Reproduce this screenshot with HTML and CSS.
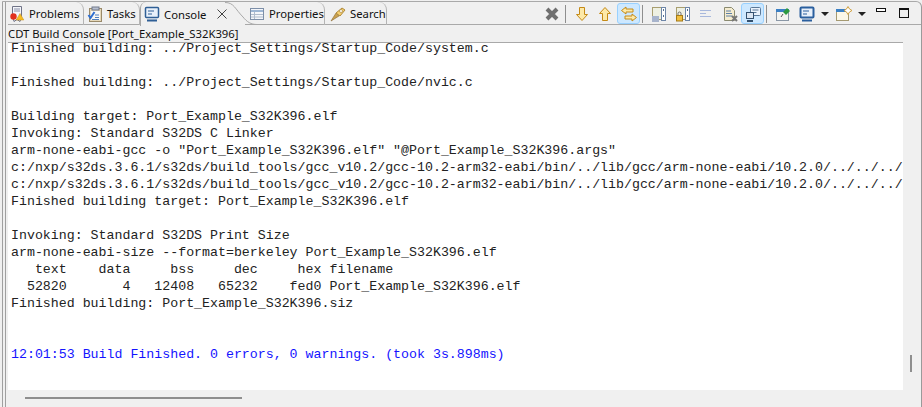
FILE: index.html
```
<!DOCTYPE html>
<html lang="en">
<head>
<meta charset="utf-8">
<title>Console</title>
<link rel="stylesheet" href="styles.css">
</head>
<body>
<div class="view">
  <div class="tabbar">
    <div class="tab tab-problems">
      <svg class="ti" viewBox="0 0 16 16"><path d="M3.500 .5h9v10l-1.500 5-3-2-3 2-1.500-5z" fill="#f4f5fa" stroke="#6f7386"/><path d="M5 3h6M5 5h6" stroke="#8a90a8"/><circle cx="4.500" cy="10.500" r="3.200" fill="#e2301e"/><path d="M11 7.500l3.800 6.500H7.200z" fill="#f6bd22" stroke="#c98f10" stroke-width=".5"/></svg>
      <span>Problems</span>
    </div>
    <div class="tab tab-tasks">
      <svg class="ti" viewBox="0 0 16 16"><rect x="2.500" y="2.500" width="12" height="13" fill="#e6d9bb" stroke="#9a8a6a"/><rect x="5" y="1" width="7" height="3" fill="#b8c0d0" stroke="#70788a"/><rect x="4" y="5" width="9" height="9" fill="#f8f8f4"/><path d="M1.500 9l2 3 4-6" fill="none" stroke="#2f6fd0" stroke-width="2"/><path d="M8 9h4M8 11.500h4M5 13.500h7" stroke="#4f7fc0"/></svg>
      <span>Tasks</span>
    </div>
    <div class="tab tab-console">
      <svg class="ti" viewBox="0 0 16 16"><rect x="1.500" y="1.500" width="13" height="10" rx="1" fill="#e8f0fa" stroke="#2f5f96" stroke-width="1.500"/><path d="M4 5h6M4 8h4" stroke="#2f5f96"/><path d="M3 14.500h10" stroke="#2f5f96" stroke-width="2"/></svg>
      <span>Console</span>
      <svg class="close" viewBox="0 0 10 10"><path d="M.5.500l9 9M9.500.500l-9 9" stroke="#444" fill="none"/></svg>
      <svg class="tail" viewBox="0 0 32 24"><path d="M0 .5C9 .5 10 7 18 15c4 5 8 7.500 14 7.500" fill="none" stroke="#a9a9a9"/></svg>
    </div>
    <div class="tab tab-properties">
      <svg class="ti" viewBox="0 0 16 16"><rect x="1.500" y="2.500" width="13" height="11" fill="#f4f6fa" stroke="#7d8fa8"/><path d="M2 5h12" stroke="#9db6d4" stroke-width="2"/><path d="M5.500 6v7M2 8.500h12M2 11h12" stroke="#b0bccc"/></svg>
      <span>Properties</span>
    </div>
    <div class="tab tab-search">
      <svg class="ti" viewBox="0 0 16 16"><path d="M1 15l5-8 3 3z" fill="#c8a050" stroke="#8a6a30" stroke-width=".6"/><path d="M6 7l6-5 3 2-5 6z" fill="#f6d070" stroke="#b08a3a"/><circle cx="11" cy="5" r="1.500" fill="#fff" stroke="#a07a30" stroke-width=".6"/></svg>
      <span>Search</span>
    </div>
    <div class="tools">
      <span class="tool"><svg viewBox="0 0 16 16"><path d="M3 3l10 10M13 3L3 13" stroke="#6f6f6f" stroke-width="4"/></svg></span>
      <i class="sep"></i>
      <span class="tool"><svg viewBox="0 0 16 16"><path d="M5.500 1.500h5v7h3L8 14.500 2.500 8.500h3z" fill="#fde9a8" stroke="#c58a16"/></svg></span>
      <span class="tool"><svg viewBox="0 0 16 16"><path d="M5.500 14.500h5v-7h3L8 1.500 2.500 7.500h3z" fill="#fde9a8" stroke="#c58a16"/></svg></span>
      <span class="tool on step"><svg viewBox="0 0 16 16"><path d="M.5 4.500L5 1v2h7v3H5v2z" fill="#fde9a8" stroke="#c58a16"/><path d="M15.500 11.500L11 8v2H4v3h7v2z" fill="#fde9a8" stroke="#c58a16"/></svg></span>
      <i class="sep"></i>
      <span class="tool"><svg viewBox="0 0 16 16"><rect x="1.500" y="1.500" width="9" height="12" fill="#eef0e2" stroke="#a89e70"/><rect x="10.500" y="1.500" width="4" height="13" fill="#fff" stroke="#6d86a8"/><rect x="12" y="3" width="1" height="2" fill="#54708f"/><rect x="12" y="9" width="1" height="2" fill="#54708f"/><rect x="1" y="10" width="7" height="6" fill="#a8b4cc"/></svg></span>
      <span class="tool step"><svg viewBox="0 0 16 16"><rect x="1.500" y="1.500" width="9" height="12" fill="#eef0e2" stroke="#a89e70"/><rect x="10.500" y="1.500" width="4" height="13" fill="#fff" stroke="#6d86a8"/><rect x="12" y="3" width="1" height="2" fill="#54708f"/><rect x="12" y="9" width="1" height="2" fill="#54708f"/><rect x="1.500" y="9.500" width="6" height="5.500" fill="#f2c040" stroke="#a47a18"/><path d="M3 9V7.500a1.500 1.500 0 013 0V9" fill="none" stroke="#6a6a6a"/></svg></span>
      <span class="tool"><svg viewBox="0 0 16 16"><path d="M2 4.500h11M2 7.500h6M2 10.500h11" stroke="#a8b8dc"/></svg></span>
      <span class="tool step"><svg viewBox="0 0 16 16"><path d="M2.500 1.500h7l3 3v10h-10z" fill="#f5ecd0" stroke="#8a8a70"/><path d="M4 5h5M4 7.500h6M4 10h6" stroke="#5c7fa8"/><path d="M10 10l5 5M15 10l-5 5" stroke="#777" stroke-width="2"/></svg></span>
      <span class="tool on"><svg viewBox="0 0 16 16"><rect x="5.500" y="1.500" width="10" height="8" rx="1" fill="#eaf2fb" stroke="#5a7898"/><path d="M7.500 4h6M7.500 6.500h4" stroke="#5a7898"/><rect x="1.500" y="6.500" width="7" height="6" fill="#dce6f2" stroke="#33506e"/><path d="M2 15h6" stroke="#33506e" stroke-width="2"/></svg></span>
      <i class="sep"></i>
      <span class="tool"><svg viewBox="0 0 16 16"><rect x="1.500" y="3.500" width="12" height="11" fill="#f4f4f0" stroke="#8a97a6"/><rect x="1" y="3" width="13" height="3" fill="#3b80c4"/><path d="M8 6l4-4 3 3-4 4z" fill="#2d9a40"/><path d="M8 8l-2 3" stroke="#555"/></svg></span>
      <span class="tool step"><svg viewBox="0 0 16 16"><rect x="1.500" y="1.500" width="13" height="10" rx="1" fill="#e8f0fa" stroke="#2a5f9e" stroke-width="2"/><path d="M4 5h6M4 8h4" stroke="#2a5f9e"/><path d="M3 14.500h10" stroke="#2a5f9e" stroke-width="2"/></svg></span>
      <span class="drop"></span>
      <span class="tool"><svg viewBox="0 0 16 16"><rect x=".5" y="3.500" width="12" height="11" fill="#fbf7e8" stroke="#a59a72"/><rect x="0" y="3" width="13" height="3" fill="#3b80c4"/><path d="M12 .5l1.500 2.500L16 4.500 13.500 6 12 8.500 10.500 6 8 4.500 10.500 3z" fill="#fff" stroke="#d0a040"/></svg></span>
      <span class="drop"></span>
      <span class="tool"><i class="win-min"></i></span>
      <span class="tool"><i class="win-max"></i></span>
    </div>
  </div>
  <div class="title">CDT Build Console [Port_Example_S32K396]</div>
  <div class="body">
    <div class="scroll">
    <pre class="console">Finished building: ../Project_Settings/Startup_Code/system.c

Finished building: ../Project_Settings/Startup_Code/nvic.c

Building target: Port_Example_S32K396.elf
Invoking: Standard S32DS C Linker
arm-none-eabi-gcc -o "Port_Example_S32K396.elf" "@Port_Example_S32K396.args"
c:/nxp/s32ds.3.6.1/s32ds/build_tools/gcc_v10.2/gcc-10.2-arm32-eabi/bin/../lib/gcc/arm-none-eabi/10.2.0/../../../..
c:/nxp/s32ds.3.6.1/s32ds/build_tools/gcc_v10.2/gcc-10.2-arm32-eabi/bin/../lib/gcc/arm-none-eabi/10.2.0/../../../..
Finished building target: Port_Example_S32K396.elf

Invoking: Standard S32DS Print Size
arm-none-eabi-size --format=berkeley Port_Example_S32K396.elf
   text    data     bss     dec     hex filename
  52820       4   12408   65232    fed0 Port_Example_S32K396.elf
Finished building: Port_Example_S32K396.siz


<span class="done">12:01:53 Build Finished. 0 errors, 0 warnings. (took 3s.898ms)</span></pre>
    </div>
    <div class="vbar"><i class="vthumb"></i></div>
  </div>
  <div class="hbar"><i class="hthumb"></i></div>
</div>
</body>
</html>
```
FILE: styles.css
```
* { box-sizing: border-box; }
html, body { margin: 0; height: 100%; }
body {
  background: #f0f0f0;
  font-family: "Noto Sans", "Liberation Sans", sans-serif;
  font-size: 11.3px;
  color: #111;
  overflow: hidden;
}
.view {
  margin: 1px 0 0 2px;
  width: 920px;
  height: 406px;
  padding-left: 5px;
  border-left: 1px solid #a0a0a0;
  border-right: 1px solid #9a9a9a;
  border-top: 1px solid #a9a9a9;
  border-top-right-radius: 6px;
  display: flex;
  flex-direction: column;
  box-shadow: inset 2px 0 0 #f0f0f0, inset 3px 0 0 #a0a0a0;
}
.tabbar {
  height: 23px;
  display: flex;
  border-bottom: 1px solid #a9a9a9;
  flex: none;
}
.tab {
  display: flex;
  align-items: center;
  height: 23px;
  gap: 4px;
  border-right: 1px solid #b4b4b4;
  border-top-right-radius: 8px;
  white-space: nowrap;
  flex: none;
}
.ti { width: 16px; height: 16px; flex: none; }
.tab-problems { width: 76px; padding-left: 1px; }
.tab-tasks { width: 56px; padding-left: 3px; }
.tab-console {
  width: 105px;
  border-right: 0;
  position: relative;
  padding-left: 3px;
  height: 24px;
  background: #f0f0f0;
  border-left: 1px solid #a9a9a9;
  border-top-left-radius: 6px;
  margin-bottom: -1px;
}
.close { width: 10px; height: 10px; margin-left: 6px; }
.tail { position: absolute; left: 84px; top: 0; width: 32px; height: 24px; }
.tab-properties { width: 80px; padding-left: 4px; }
.tab-search { width: 62px; padding-left: 5px; }
.tools {
  margin-left: auto;
  display: flex;
  align-items: center;
  height: 23px;
  padding-right: 6px;
}
.tool {
  width: 23px;
  height: 21px;
  display: flex;
  align-items: center;
  justify-content: center;
  flex: none;
}
.tool svg { width: 16px; height: 16px; }
.step { margin-left: 1px; }
.tool.on {
  background: #cde8ff;
  border: 1px solid #99d1ff;
  border-radius: 3px;
}
.sep { width: 1px; height: 18px; background: #8e8e8e; margin: 0 4px 0 2px; flex: none; }
.drop {
  width: 0;
  height: 0;
  border-left: 4px solid transparent;
  border-right: 4px solid transparent;
  border-top: 4px solid #222;
  margin: 0 3px;
  flex: none;
}
.win-min { width: 10px; height: 4px; border: 1px solid #111; background: #fff; margin-bottom: 7px; }
.win-max { width: 10px; height: 10px; border: 1px solid #111; border-top-width: 2px; margin-bottom: 2px; }
.title {
  height: 17px;
  flex: none;
  line-height: 17px;
  white-space: nowrap;
}
.body {
  flex: 1;
  display: flex;
  min-height: 0;
}
.scroll {
  flex: 1;
  min-width: 0;
  background: #fff;
  border-top: 1px solid #a9a9a9;
  overflow: hidden;
}
.console {
  margin: -3px 0 0 3px;
  font-family: "Liberation Mono", monospace;
  font-size: 13.28px;
  line-height: 17px;
  color: #222;
  white-space: pre;
}
.done { color: #1414ff; }
.vbar {
  width: 18px;
  flex: none;
  position: relative;
}
.vthumb { position: absolute; left: 7px; top: 313px; width: 2px; height: 17px; background: #8e8e8e; }
.hbar {
  height: 17px;
  flex: none;
  padding: 7px 0 0 17px;
}
.hthumb { display: block; width: 217px; height: 2px; background: #8e8e8e; }
```
